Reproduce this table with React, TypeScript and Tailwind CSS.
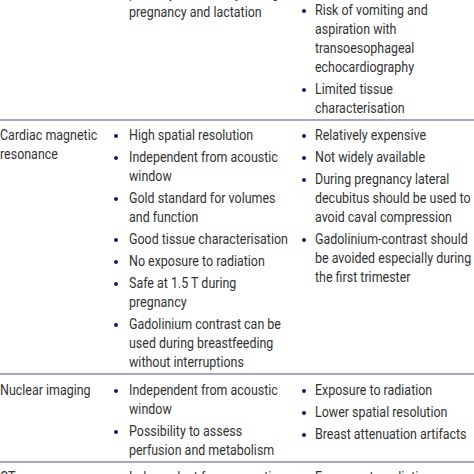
import React from "react";

type Item = string[];

const Dot = ({ col }: { col: 2 | 3 }) => (
  <span className={col === 2 ? "w-[17px] shrink-0 flex" : "w-[15px] shrink-0 flex"}>
    <span
      className={
        col === 2
          ? "mt-[8px] ml-[2px] w-[4px] h-[4px] rounded-full bg-[#1d1a6b]"
          : "mt-[8px] ml-[1.5px] w-[4px] h-[4px] rounded-full bg-[#1d1a6b]"
      }
    />
  </span>
);

const Line = ({ text }: { text: string }) => (
  <span className="block whitespace-nowrap origin-left scale-x-[0.83]">{text}</span>
);

const List = ({ items, col, noBulletFirst }: { items: Item[]; col: 2 | 3; noBulletFirst?: boolean }) => (
  <ul className="flex flex-col gap-[3px]">
    {items.map((lines, i) => (
      <li key={i} className="flex">
        {noBulletFirst && i === 0 ? (
          <span className={col === 2 ? "w-[17px] shrink-0" : "w-[15px] shrink-0"} />
        ) : (
          <Dot col={col} />
        )}
        <span className="min-w-0">
          {lines.map((l, j) => (
            <Line key={j} text={l} />
          ))}
        </span>
      </li>
    ))}
  </ul>
);

const Row = ({
  first,
  col3Pad,
  label,
  adv,
  dis,
  advNoBulletFirst,
}: {
  first?: boolean;
  col3Pad?: boolean;
  label: string[];
  adv: Item[];
  dis: Item[];
  advNoBulletFirst?: boolean;
}) => (
  <div
    className={
      "grid grid-cols-[112px_188px_1fr] pt-[5.5px] pb-[1px] border-b-2 border-[#a6a6c4] " +
      (first ? "mt-[-21.5px]" : "")
    }
  >
    <div className="min-w-0">
      {label.map((l, i) => (
        <Line key={i} text={l} />
      ))}
    </div>
    <div className="min-w-0">
      <List items={adv} col={2} noBulletFirst={advNoBulletFirst} />
    </div>
    <div className={col3Pad ? "min-w-0 pt-[16.5px]" : "min-w-0"}>
      <List items={dis} col={3} />
    </div>
  </div>
);

export default function App() {
  return (
    <div
      className="w-[474px] h-[474px] overflow-hidden bg-white text-[#333333] text-[15px] leading-[19px]"
      style={{ fontFamily: '"Roboto", "Liberation Sans", sans-serif' }}
    >
      <Row
        first
        col3Pad
        label={[""]}
        advNoBulletFirst
        adv={[["possibly used safely during", "pregnancy and lactation"]]}
        dis={[
          ["Risk of vomiting and", "aspiration with", "transoesophageal", "echocardiography"],
          ["Limited tissue", "characterisation"],
        ]}
      />
      <Row
        label={["Cardiac magnetic", "resonance"]}
        adv={[
          ["High spatial resolution"],
          ["Independent from acoustic", "window"],
          ["Gold standard for volumes", "and function"],
          ["Good tissue characterisation"],
          ["No exposure to radiation"],
          ["Safe at 1.5 T during", "pregnancy"],
          ["Gadolinium contrast can be", "used during breastfeeding", "without interruptions"],
        ]}
        dis={[
          ["Relatively expensive"],
          ["Not widely available"],
          ["During pregnancy lateral", "decubitus should be used to", "avoid caval compression"],
          ["Gadolinium-contrast should", "be avoided especially during", "the first trimester"],
        ]}
      />
      <Row
        label={["Nuclear imaging"]}
        adv={[
          ["Independent from acoustic", "window"],
          ["Possibility to assess", "perfusion and metabolism"],
        ]}
        dis={[["Exposure to radiation"], ["Lower spatial resolution"], ["Breast attenuation artifacts"]]}
      />
      <Row
        label={["CT"]}
        adv={[["Independent from acoustic", "window"]]}
        dis={[["Exposure to radiation"]]}
      />
    </div>
  );
}
